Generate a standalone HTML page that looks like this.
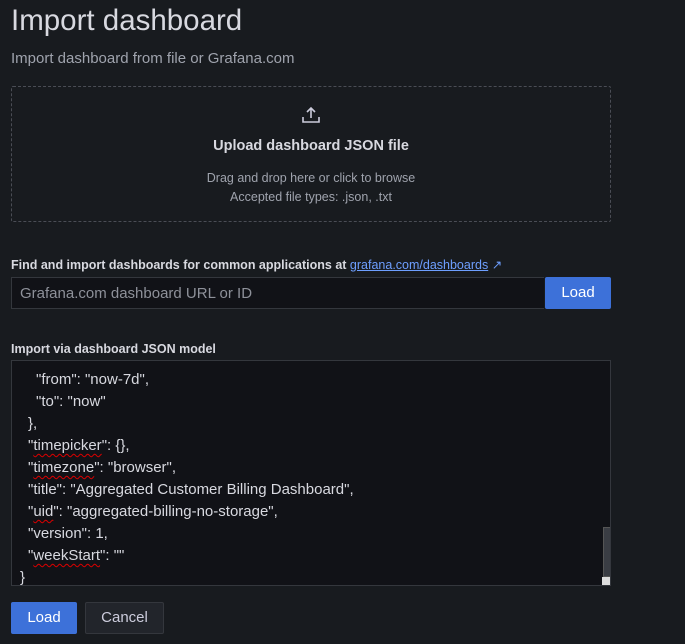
<!DOCTYPE html><html><head><style>
body{margin:0;background:#181b1f;width:685px;height:644px;overflow:hidden;font-family:"Liberation Sans",sans-serif;color:#ccccdc;position:relative}
.a{position:absolute}
h1{position:absolute;left:11px;top:4px;margin:0;font-size:29.5px;font-weight:400;color:#d8d9e0}
.sub{left:11px;top:50px;font-size:15px;color:#9fa3ad}
.dz{left:11px;top:86px;width:598px;height:134px;border:1px dashed #4a4d55;border-radius:2px;text-align:center}
.lbl{font-size:12.5px;font-weight:700;color:#d8d9e0}
.ta{left:11px;top:360px;width:598px;height:224px;background:#111217;border:1px solid #34373d;overflow:hidden}
.ta div{position:absolute;font-size:15px;color:#d8d9e0;white-space:pre}
.sq{text-decoration:underline wavy #d00;text-decoration-thickness:1px;text-underline-offset:3px}
.btn{font-size:15px;text-align:center;line-height:32px;border-radius:2px}
</style></head><body>
<h1>Import dashboard</h1>
<div class="a sub">Import dashboard from file or Grafana.com</div>
<div class="a dz">
<svg class="a" style="left:289px;top:18px" width="20" height="20" viewBox="0 0 20 20" fill="none" stroke="#ccccdc" stroke-width="1.6"><path d="M10 3v10M6 7l4-4 4 4M2 12v5h16v-5"/></svg>
<div class="a" style="left:0;right:0;top:51px;font-size:14.5px;font-weight:700;color:#d8d9e0">Upload dashboard JSON file</div>
<div class="a" style="left:0;right:0;top:82px;font-size:12.5px;color:#9fa3ad;line-height:19px">Drag and drop here or click to browse<br>Accepted file types: .json, .txt</div>
</div>
<div class="a lbl" style="left:11px;top:257px">Find and import dashboards for common applications at <span style="color:#6e9fff;font-weight:400;text-decoration:underline">grafana.com/dashboards</span> <span style="color:#6e9fff;font-weight:400">↗</span></div>
<div class="a" style="left:11px;top:277px;width:532px;height:30px;background:#111217;border:1px solid #34373d;border-right:none"></div>
<div class="a" style="left:20px;top:285px;font-size:15px;color:#8e919a">Grafana.com dashboard URL or ID</div>
<div class="a btn" style="left:545px;top:277px;width:66px;background:#3d71d9;color:#fff">Load</div>
<div class="a lbl" style="left:11px;top:342px">Import via dashboard JSON model</div>
<div class="a ta">
<div style="left:18px;top:-18px">"time": {</div>
<div style="left:24px;top:10px">"from": "now-7d",</div>
<div style="left:24px;top:32px">"to": "now"</div>
<div style="left:16px;top:54px">},</div>
<div style="left:16px;top:76px">"<span class="sq">timepicker</span>": {},</div>
<div style="left:16px;top:98px">"<span class="sq">timezone</span>": "browser",</div>
<div style="left:16px;top:120px">"title": "Aggregated Customer Billing Dashboard",</div>
<div style="left:16px;top:142px">"<span class="sq">uid</span>": "aggregated-billing-no-storage",</div>
<div style="left:16px;top:164px">"version": 1,</div>
<div style="left:16px;top:186px">"<span class="sq">weekStart</span>": ""</div>
<div style="left:8px;top:208px">}</div>
<div class="a" style="left:591px;top:166px;width:6px;height:48px;background:#3a3d44;border:1px solid #555"></div>
<div class="a" style="left:590px;top:216px;width:8px;height:8px;background:#ddd"></div>
</div>
<div class="a btn" style="left:11px;top:602px;width:66px;background:#3d71d9;color:#fff">Load</div>
<div class="a btn" style="left:85px;top:602px;width:77px;height:30px;line-height:30px;background:#22252b;border:1px solid #34373d;color:#ccccdc">Cancel</div>
</body></html>
